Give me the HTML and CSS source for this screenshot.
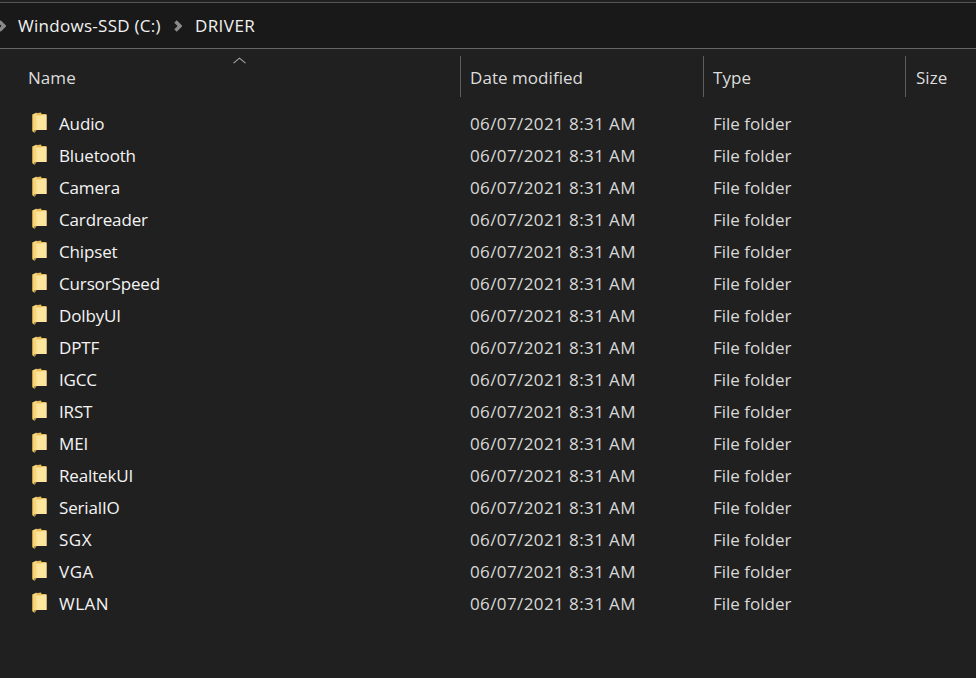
FILE: index.html
```html
<!DOCTYPE html>
<html lang="en">
<head>
<meta charset="utf-8">
<title>DRIVER</title>
<link rel="stylesheet" href="styles.css">
</head>
<body>
<svg class="defs" width="0" height="0" aria-hidden="true">
  <symbol id="folder" viewBox="0 0 15 21">
    <path d="M4 1.2 L9 0.4 L9.6 2 L14.4 2 L14.4 18 L4 18 Z" fill="#e9bd58"/>
    <path d="M4 3.4 L14.6 3 L14.6 18 L4 18 Z" fill="#fde59e"/>
    <path d="M0.4 2.6 L4.6 0.6 L4.6 18 L2.6 18 L2.6 21 L0.4 19 Z" fill="#f8d67f"/>
    <path d="M0.4 2.6 L1.2 2.2 L1.2 19.8 L0.4 19 Z" fill="#d9a83f"/>
    <path d="M2.6 18 L4.6 18 L2.6 21 Z" fill="#c99a3a"/>
  </symbol>
</svg>
<header class="crumbs">
  <svg class="chev chev-first" viewBox="0 0 8 12"><path d="M1.5 1.5 L6 6 L1.5 10.5" /></svg>
  <span class="crumb">Windows-SSD (C:)</span>
  <svg class="chev" viewBox="0 0 8 12"><path d="M1.5 1.5 L6 6 L1.5 10.5" /></svg>
  <span class="crumb crumb-last">DRIVER</span>
</header>
<main class="list">
  <div class="head">
    <div class="col col-name">Name
      <svg class="sort" viewBox="0 0 12 6"><path d="M0.5 5.5 L6 0.8 L11.5 5.5"/></svg>
    </div>
    <div class="col col-date">Date modified</div>
    <div class="col col-type">Type</div>
    <div class="col col-size">Size</div>
  </div>
  <div class="rows">
    <div class="row"><div class="name"><svg class="ico"><use href="#folder"/></svg>Audio</div><div class="date">06/07/2021 8:31 AM</div><div class="type">File folder</div></div>
    <div class="row"><div class="name"><svg class="ico"><use href="#folder"/></svg>Bluetooth</div><div class="date">06/07/2021 8:31 AM</div><div class="type">File folder</div></div>
    <div class="row"><div class="name"><svg class="ico"><use href="#folder"/></svg>Camera</div><div class="date">06/07/2021 8:31 AM</div><div class="type">File folder</div></div>
    <div class="row"><div class="name"><svg class="ico"><use href="#folder"/></svg>Cardreader</div><div class="date">06/07/2021 8:31 AM</div><div class="type">File folder</div></div>
    <div class="row"><div class="name"><svg class="ico"><use href="#folder"/></svg>Chipset</div><div class="date">06/07/2021 8:31 AM</div><div class="type">File folder</div></div>
    <div class="row"><div class="name"><svg class="ico"><use href="#folder"/></svg>CursorSpeed</div><div class="date">06/07/2021 8:31 AM</div><div class="type">File folder</div></div>
    <div class="row"><div class="name"><svg class="ico"><use href="#folder"/></svg>DolbyUI</div><div class="date">06/07/2021 8:31 AM</div><div class="type">File folder</div></div>
    <div class="row"><div class="name"><svg class="ico"><use href="#folder"/></svg>DPTF</div><div class="date">06/07/2021 8:31 AM</div><div class="type">File folder</div></div>
    <div class="row"><div class="name"><svg class="ico"><use href="#folder"/></svg>IGCC</div><div class="date">06/07/2021 8:31 AM</div><div class="type">File folder</div></div>
    <div class="row"><div class="name"><svg class="ico"><use href="#folder"/></svg>IRST</div><div class="date">06/07/2021 8:31 AM</div><div class="type">File folder</div></div>
    <div class="row"><div class="name"><svg class="ico"><use href="#folder"/></svg>MEI</div><div class="date">06/07/2021 8:31 AM</div><div class="type">File folder</div></div>
    <div class="row"><div class="name"><svg class="ico"><use href="#folder"/></svg>RealtekUI</div><div class="date">06/07/2021 8:31 AM</div><div class="type">File folder</div></div>
    <div class="row"><div class="name"><svg class="ico"><use href="#folder"/></svg>SerialIO</div><div class="date">06/07/2021 8:31 AM</div><div class="type">File folder</div></div>
    <div class="row"><div class="name caps"><svg class="ico"><use href="#folder"/></svg>SGX</div><div class="date">06/07/2021 8:31 AM</div><div class="type">File folder</div></div>
    <div class="row"><div class="name caps"><svg class="ico"><use href="#folder"/></svg>VGA</div><div class="date">06/07/2021 8:31 AM</div><div class="type">File folder</div></div>
    <div class="row"><div class="name caps"><svg class="ico"><use href="#folder"/></svg>WLAN</div><div class="date">06/07/2021 8:31 AM</div><div class="type">File folder</div></div>
  </div>
</main>
</body>
</html>
```
FILE: styles.css
```css
* { box-sizing: border-box; }
html, body { margin: 0; height: 100%; overflow: hidden; }
body {
  background: #202020;
  color: #fff;
  font-family: "Open Sans", "Noto Sans", sans-serif;
  font-size: 17px;
}
.defs { display: block; height: 0; }
.crumbs {
  height: 47px;
  margin-top: 2px;
  background: #191919;
  border-top: 1px solid #555;
  border-bottom: 1px solid #666;
  display: flex;
  align-items: center;
}
.chev { width: 8px; height: 12px; flex: none; }
.chev path { fill: none; stroke: #8a8a8a; stroke-width: 3.4; }
.chev-first { margin-left: -2px; margin-right: 12px; }
.crumb { color: #f2f2f2; letter-spacing: 0.28px; padding-bottom: 1px; }
.crumb-last { letter-spacing: 0.45px; }
.crumb + .chev { margin-left: 13px; margin-right: 13px; }
.list { display: flex; flex-direction: column; }
.head {
  display: grid;
  grid-template-columns: 460px 243px 202px 1fr;
  height: 41px;
  margin-top: 7px;
  align-items: stretch;
}
.col {
  position: relative;
  display: flex;
  align-items: center;
  padding-left: 9px;
  padding-top: 1px;
  color: #dcdcdc;
  letter-spacing: 0.05px;
  border-left: 1px solid #5e5e5e;
}
.col-name { border-left: 0; padding-left: 28px; }
.col-size { padding-left: 10px; }
.sort {
  position: absolute;
  left: 233px;
  top: 1px;
  width: 13px;
  height: 7px;
}
.sort path { fill: none; stroke: #a8a8a8; stroke-width: 1; }
.rows { display: flex; flex-direction: column; margin-top: 10px; }
.row {
  display: grid;
  grid-template-columns: 460px 243px 1fr;
  height: 32px;
  align-items: center;
  color: #d9d9d9;
}
.name { display: flex; align-items: center; padding-left: 32px; color: #f4f4f4; letter-spacing: -0.15px; }
.caps { letter-spacing: 0.5px; }
.ico { width: 15px; height: 21px; margin-right: 12px; flex: none; position: relative; top: -1px; }
.date, .type { padding-left: 10px; }
.date { letter-spacing: 0.4px; }
```
